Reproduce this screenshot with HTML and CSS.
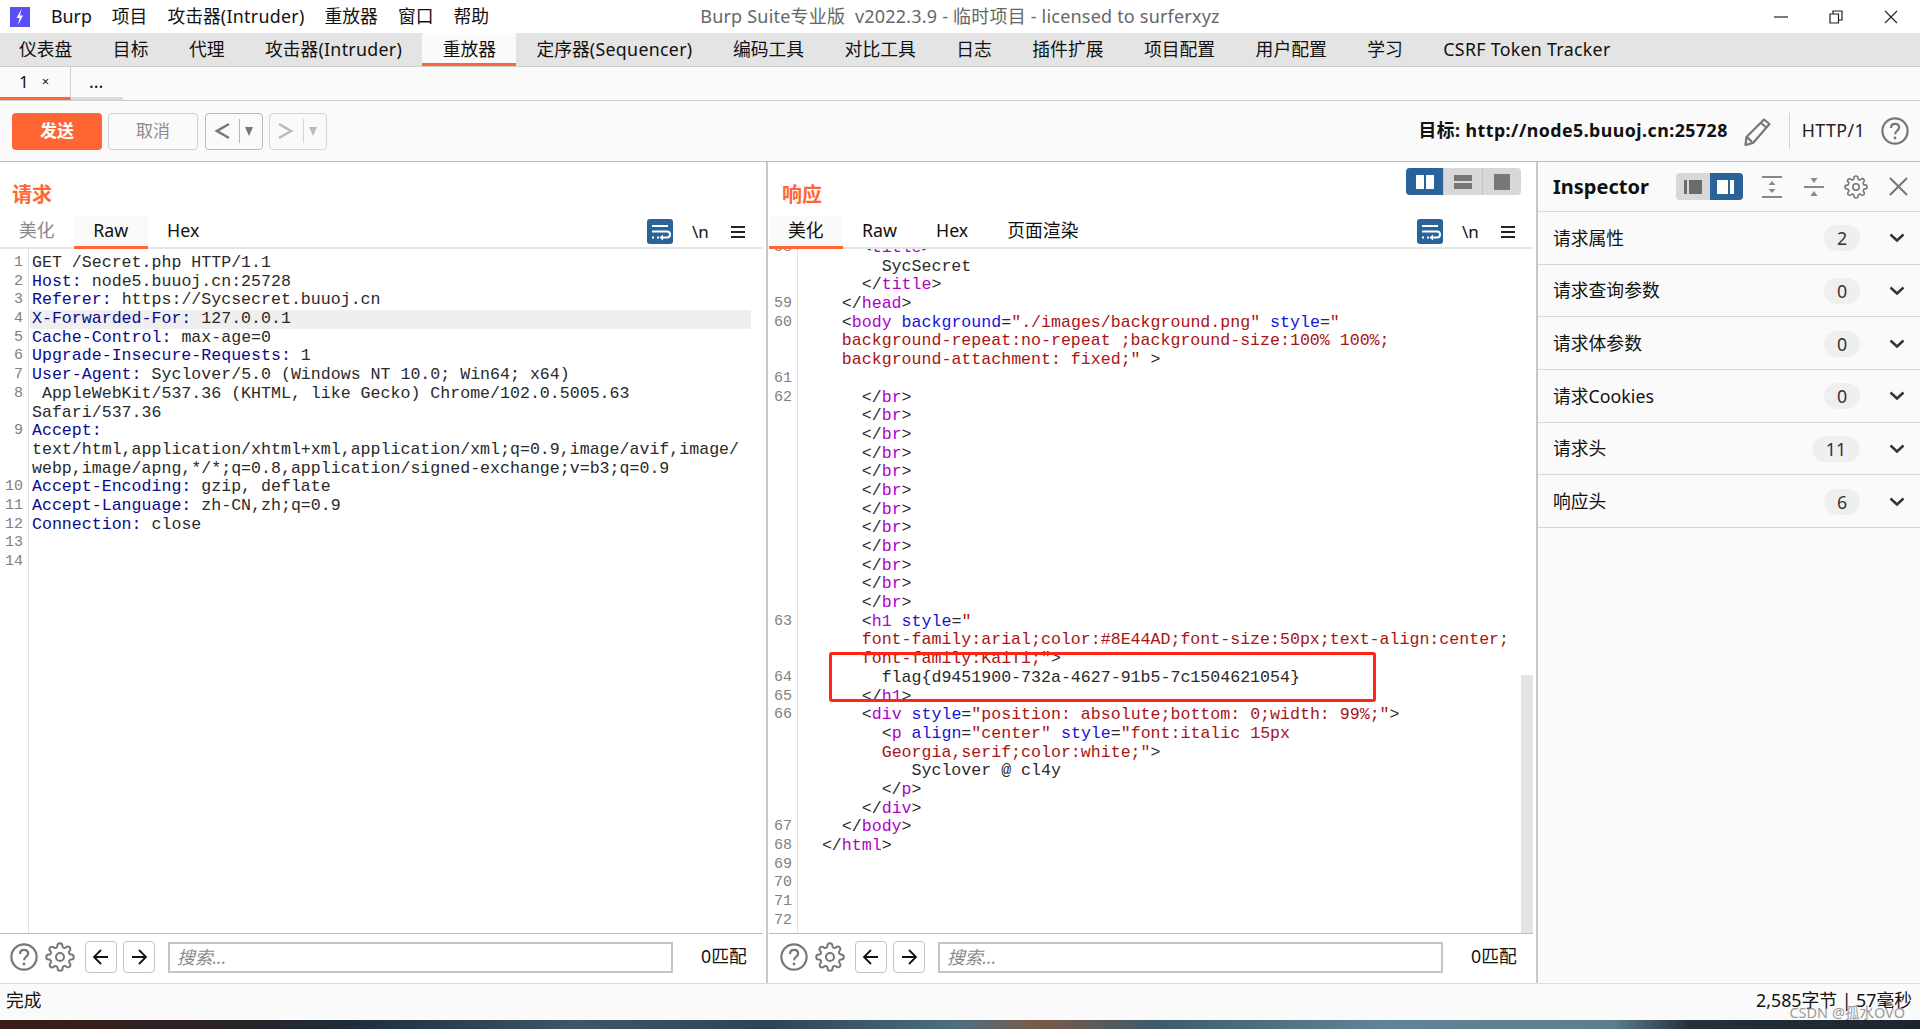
FILE: index.html
```html
<!DOCTYPE html>
<html lang="zh-CN">
<head>
<meta charset="utf-8">
<title>Burp Suite</title>
<link rel="stylesheet" href="styles.css">
</head>
<body>
<svg class="defs" width="0" height="0" aria-hidden="true">
  <defs>
    <symbol id="gear" viewBox="0 0 24 24"><circle cx="12" cy="12" r="3.2" fill="none" stroke="currentColor" stroke-width="1.6"/><path fill="none" stroke="currentColor" stroke-width="1.6" stroke-linejoin="round" d="M19.4 15a1.65 1.65 0 0 0 .33 1.82l.06.06a2 2 0 1 1-2.83 2.83l-.06-.06a1.65 1.65 0 0 0-2.82 1.17V21a2 2 0 0 1-4 0v-.09A1.65 1.65 0 0 0 7.2 19.74l-.06.06a2 2 0 1 1-2.83-2.83l.06-.06a1.65 1.65 0 0 0-1.17-2.82H3a2 2 0 0 1 0-4h.09A1.65 1.65 0 0 0 4.26 7.2l-.06-.06a2 2 0 1 1 2.83-2.83l.06.06a1.65 1.65 0 0 0 2.82-1.17V3a2 2 0 0 1 4 0v.09a1.65 1.65 0 0 0 2.89 1.17l.06-.06a2 2 0 1 1 2.83 2.83l-.06.06a1.65 1.65 0 0 0 1.17 2.82H21a2 2 0 0 1 0 4h-.09A1.65 1.65 0 0 0 19.4 15z"/></symbol>
    <symbol id="help" viewBox="0 0 28 28"><circle cx="14" cy="14" r="12.6" fill="none" stroke="currentColor" stroke-width="2.2"/><path fill="none" stroke="currentColor" stroke-width="2.2" d="M10 11c0-2.6 1.8-4.1 4.1-4.1s4 1.5 4 3.7c0 3.1-4 3.3-4 6.6"/><circle cx="14" cy="21" r="1.4" fill="currentColor"/></symbol>
    <symbol id="wrap" viewBox="0 0 26 25"><rect width="26" height="25" rx="3" fill="#2a6398"/><path fill="none" stroke="#fff" stroke-width="2" d="M5 7h16M5 12.500h15a2.500 2.500 0 0 1 0 6h-5M5 18.500h2M10 18.500h2"/><path fill="#fff" d="M16 15.500v6l-3.500-3z"/></symbol>
    <symbol id="back" viewBox="0 0 20 20"><path fill="none" stroke="currentColor" stroke-width="1.800" d="M17 10H3M10 3l-7 7 7 7"/></symbol>
    <symbol id="fwd" viewBox="0 0 20 20"><path fill="none" stroke="currentColor" stroke-width="1.800" d="M3 10h14M10 3l7 7-7 7"/></symbol>
    <symbol id="burger" viewBox="0 0 16 14"><path fill="none" stroke="currentColor" stroke-width="2" d="M1 2h14M1 7h14M1 12h14"/></symbol>
    <symbol id="chev" viewBox="0 0 16 10"><path fill="none" stroke="currentColor" stroke-width="2.400" d="M1.500 1.500 8 7.500l6.500-6"/></symbol>
  </defs>
</svg>

<header class="titlebar">
  <nav class="menu">
    <svg class="logo" viewBox="0 0 20 20"><rect width="20" height="20" fill="#5b50f5"/><path fill="#fff" d="M11.500 2 6.500 11h3l-1.500 7 5-9.500h-3z"/></svg>
    <span class="menu-item first">Burp</span><span class="menu-item">项目</span><span class="menu-item">攻击器<span class="lat">(Intruder)</span></span><span class="menu-item">重放器</span><span class="menu-item">窗口</span><span class="menu-item">帮助</span>
  </nav>
  <div class="app-title">Burp Suite专业版&nbsp; v2022.3.9 - 临时项目 - licensed to surferxyz</div>
  <div class="win-controls">
    <svg class="win-ico" viewBox="0 0 14 14"><path stroke="#222" stroke-width="1.200" d="M0 7h14"/></svg>
    <svg class="win-ico" viewBox="0 0 14 14"><path fill="none" stroke="#222" stroke-width="1.200" d="M1 4h8.500v9H1zM4 4V1h9v9H9.500"/></svg>
    <svg class="win-ico" viewBox="0 0 14 14"><path stroke="#222" stroke-width="1.100" d="M1 1l12 12M13 1 1 13"/></svg>
  </div>
</header>

<nav class="main-tabs">
  <span class="main-tab">仪表盘</span><span class="main-tab">目标</span><span class="main-tab">代理</span><span class="main-tab">攻击器<span class="lat">(Intruder)</span></span><span class="main-tab active">重放器</span><span class="main-tab">定序器<span class="lat">(Sequencer)</span></span><span class="main-tab">编码工具</span><span class="main-tab">对比工具</span><span class="main-tab">日志</span><span class="main-tab">插件扩展</span><span class="main-tab">项目配置</span><span class="main-tab">用户配置</span><span class="main-tab">学习</span><span class="main-tab lat">CSRF Token Tracker</span>
</nav>

<nav class="req-tabs">
  <span class="req-tab active"><span class="req-num">1</span><span class="req-x">×</span></span>
  <span class="req-tab more">...</span>
</nav>

<section class="toolbar">
  <button class="btn send">发送</button>
  <button class="btn cancel">取消</button>
  <div class="nav-btn">
    <svg class="nav-arrow" viewBox="0 0 16 20"><path fill="none" stroke="#777" stroke-width="2.600" d="M15 3 3 10l12 7"/></svg><i class="nav-sep"></i><i class="nav-tri"></i>
  </div>
  <div class="nav-btn disabled">
    <svg class="nav-arrow" viewBox="0 0 16 20"><path fill="none" stroke="#bbb" stroke-width="2.600" d="M1 3l12 7-12 7"/></svg><i class="nav-sep"></i><i class="nav-tri"></i>
  </div>
  <div class="target">目标: http://node5.buuoj.cn:25728</div>
  <svg class="pencil" viewBox="0 0 30 30"><path fill="none" stroke="#777" stroke-width="2.200" stroke-linejoin="round" d="M21 3.500 26.500 8 10 27l-7.500 2 1-8zM18 7l6 5M4 21l5 5"/></svg>
  <i class="tool-sep"></i>
  <span class="http">HTTP/1</span>
  <svg class="help-lg"><use href="#help"/></svg>
</section>

<main class="workspace">
  <section class="pane pane-req">
    <div class="pane-head"><h2 class="pane-title">请求</h2></div>
    <div class="tabs">
      <span class="tab muted">美化</span><span class="tab active">Raw</span><span class="tab">Hex</span>
      <div class="tab-tools">
        <svg class="wrap-ico"><use href="#wrap"/></svg><span class="nl">\n</span><svg class="burger"><use href="#burger"/></svg>
      </div>
    </div>
    <div class="editor">
      <div class="lines">
        <div class="row"><span class="num">1</span><span class="txt">GET /Secret.php HTTP/1.1</span></div>
        <div class="row"><span class="num">2</span><span class="txt"><b>Host:</b> node5.buuoj.cn:25728</span></div>
        <div class="row"><span class="num">3</span><span class="txt"><b>Referer:</b> https://Sycsecret.buuoj.cn</span></div>
        <div class="row hl"><span class="num">4</span><span class="txt"><b>X-Forwarded-For:</b> 127.0.0.1</span></div>
        <div class="row"><span class="num">5</span><span class="txt"><b>Cache-Control:</b> max-age=0</span></div>
        <div class="row"><span class="num">6</span><span class="txt"><b>Upgrade-Insecure-Requests:</b> 1</span></div>
        <div class="row"><span class="num">7</span><span class="txt"><b>User-Agent:</b> Syclover/5.0 (Windows NT 10.0; Win64; x64)</span></div>
        <div class="row"><span class="num">8</span><span class="txt"> AppleWebKit/537.36 (KHTML, like Gecko) Chrome/102.0.5005.63</span></div>
        <div class="row"><span class="num"></span><span class="txt">Safari/537.36</span></div>
        <div class="row"><span class="num">9</span><span class="txt"><b>Accept:</b></span></div>
        <div class="row"><span class="num"></span><span class="txt">text/html,application/xhtml+xml,application/xml;q=0.9,image/avif,image/</span></div>
        <div class="row"><span class="num"></span><span class="txt">webp,image/apng,*/*;q=0.8,application/signed-exchange;v=b3;q=0.9</span></div>
        <div class="row"><span class="num">10</span><span class="txt"><b>Accept-Encoding:</b> gzip, deflate</span></div>
        <div class="row"><span class="num">11</span><span class="txt"><b>Accept-Language:</b> zh-CN,zh;q=0.9</span></div>
        <div class="row"><span class="num">12</span><span class="txt"><b>Connection:</b> close</span></div>
        <div class="row"><span class="num">13</span><span class="txt"></span></div>
        <div class="row"><span class="num">14</span><span class="txt"></span></div>
      </div>
    </div>
    <div class="searchbar">
      <svg class="help-sm"><use href="#help"/></svg>
      <svg class="gear-sm"><use href="#gear"/></svg>
      <span class="arrow-btn"><svg class="arrow-ico"><use href="#back"/></svg></span>
      <span class="arrow-btn"><svg class="arrow-ico"><use href="#fwd"/></svg></span>
      <div class="search-input">搜索...</div>
      <span class="matches">0匹配</span>
    </div>
  </section>

  <section class="pane pane-res">
    <div class="pane-head">
      <h2 class="pane-title">响应</h2>
      <div class="layout-switch">
        <span class="seg on"><svg class="seg-ico" viewBox="0 0 20 16"><path fill="#fff" d="M1 1h8v14H1zM11 1h8v14h-8z"/></svg></span>
        <span class="seg"><svg class="seg-ico" viewBox="0 0 20 16"><path fill="#777" d="M1 1h18v6H1zM1 9h18v6H1z"/></svg></span>
        <span class="seg"><svg class="seg-ico" viewBox="0 0 20 16"><path fill="#777" d="M2 0h16v16H2z"/></svg></span>
      </div>
    </div>
    <div class="tabs">
      <span class="tab active">美化</span><span class="tab">Raw</span><span class="tab">Hex</span><span class="tab">页面渲染</span>
      <div class="tab-tools">
        <svg class="wrap-ico"><use href="#wrap"/></svg><span class="nl">\n</span><svg class="burger"><use href="#burger"/></svg>
      </div>
    </div>
    <div class="editor">
      <div class="lines scrolled">
        <div class="row"><span class="num">58</span><span class="txt">      &lt;<u>title</u>&gt;</span></div>
        <div class="row"><span class="num"></span><span class="txt">        SycSecret</span></div>
        <div class="row"><span class="num"></span><span class="txt">      &lt;/<u>title</u>&gt;</span></div>
        <div class="row"><span class="num">59</span><span class="txt">    &lt;/<u>head</u>&gt;</span></div>
        <div class="row"><span class="num">60</span><span class="txt">    &lt;<u>body</u> <b>background</b>=<s>"./images/background.png"</s> <b>style</b>=<s>"</s></span></div>
        <div class="row"><span class="num"></span><span class="txt">    <s>background-repeat:no-repeat ;background-size:100% 100%;</s></span></div>
        <div class="row"><span class="num"></span><span class="txt">    <s>background-attachment: fixed;"</s> &gt;</span></div>
        <div class="row"><span class="num">61</span><span class="txt"></span></div>
        <div class="row"><span class="num">62</span><span class="txt">      &lt;/<u>br</u>&gt;</span></div>
        <div class="row"><span class="num"></span><span class="txt">      &lt;/<u>br</u>&gt;</span></div>
        <div class="row"><span class="num"></span><span class="txt">      &lt;/<u>br</u>&gt;</span></div>
        <div class="row"><span class="num"></span><span class="txt">      &lt;/<u>br</u>&gt;</span></div>
        <div class="row"><span class="num"></span><span class="txt">      &lt;/<u>br</u>&gt;</span></div>
        <div class="row"><span class="num"></span><span class="txt">      &lt;/<u>br</u>&gt;</span></div>
        <div class="row"><span class="num"></span><span class="txt">      &lt;/<u>br</u>&gt;</span></div>
        <div class="row"><span class="num"></span><span class="txt">      &lt;/<u>br</u>&gt;</span></div>
        <div class="row"><span class="num"></span><span class="txt">      &lt;/<u>br</u>&gt;</span></div>
        <div class="row"><span class="num"></span><span class="txt">      &lt;/<u>br</u>&gt;</span></div>
        <div class="row"><span class="num"></span><span class="txt">      &lt;/<u>br</u>&gt;</span></div>
        <div class="row"><span class="num"></span><span class="txt">      &lt;/<u>br</u>&gt;</span></div>
        <div class="row"><span class="num">63</span><span class="txt">      &lt;<u>h1</u> <b>style</b>=<s>"</s></span></div>
        <div class="row"><span class="num"></span><span class="txt">      <s>font-family:arial;color:#8E44AD;font-size:50px;text-align:center;</s></span></div>
        <div class="row"><span class="num"></span><span class="txt">      <s>font-family:KaiTi;"</s>&gt;</span></div>
        <div class="row"><span class="num">64</span><span class="txt">        flag{d9451900-732a-4627-91b5-7c1504621054}</span></div>
        <div class="row"><span class="num">65</span><span class="txt">      &lt;/<u>h1</u>&gt;</span></div>
        <div class="row"><span class="num">66</span><span class="txt">      &lt;<u>div</u> <b>style</b>=<s>"position: absolute;bottom: 0;width: 99%;"</s>&gt;</span></div>
        <div class="row"><span class="num"></span><span class="txt">        &lt;<u>p</u> <b>align</b>=<s>"center"</s> <b>style</b>=<s>"font:italic 15px</s></span></div>
        <div class="row"><span class="num"></span><span class="txt">        <s>Georgia,serif;color:white;"</s>&gt;</span></div>
        <div class="row"><span class="num"></span><span class="txt">           Syclover @ cl4y</span></div>
        <div class="row"><span class="num"></span><span class="txt">        &lt;/<u>p</u>&gt;</span></div>
        <div class="row"><span class="num"></span><span class="txt">      &lt;/<u>div</u>&gt;</span></div>
        <div class="row"><span class="num">67</span><span class="txt">    &lt;/<u>body</u>&gt;</span></div>
        <div class="row"><span class="num">68</span><span class="txt">  &lt;/<u>html</u>&gt;</span></div>
        <div class="row"><span class="num">69</span><span class="txt"></span></div>
        <div class="row"><span class="num">70</span><span class="txt"></span></div>
        <div class="row"><span class="num">71</span><span class="txt"></span></div>
        <div class="row"><span class="num">72</span><span class="txt"></span></div>
      </div>
      <div class="scroll-thumb"></div>
      <div class="flag-box"></div>
    </div>
    <div class="searchbar">
      <svg class="help-sm"><use href="#help"/></svg>
      <svg class="gear-sm"><use href="#gear"/></svg>
      <span class="arrow-btn"><svg class="arrow-ico"><use href="#back"/></svg></span>
      <span class="arrow-btn"><svg class="arrow-ico"><use href="#fwd"/></svg></span>
      <div class="search-input">搜索...</div>
      <span class="matches">0匹配</span>
    </div>
  </section>

  <aside class="inspector">
    <div class="insp-head">
      <h2 class="insp-title">Inspector</h2>
      <div class="insp-switch">
        <span class="iseg"><svg class="iseg-ico" viewBox="0 0 18 14"><path fill="#6b6b6b" d="M0 0h3v14H0zM5 0h13v14H5z"/></svg></span>
        <span class="iseg on"><svg class="iseg-ico" viewBox="0 0 18 14"><path fill="#fff" d="M0 0h11v14H0zM13 0h4v14h-4z"/></svg></span>
      </div>
      <svg class="insp-ico first" viewBox="0 0 20 22"><path stroke="#888" stroke-width="2" d="M0 1h20M0 21h20"/><path fill="#888" d="M10 5l3.500 4h-7zM10 17l-3.500-4h7z"/></svg>
      <svg class="insp-ico" viewBox="0 0 20 22"><path stroke="#888" stroke-width="2" d="M0 11h20"/><path fill="#888" d="M10 7 6.500 2h7zM10 15l3.500 5h-7z"/></svg>
      <svg class="insp-gear"><use href="#gear"/></svg>
      <svg class="insp-close" viewBox="0 0 20 20"><path stroke="#777" stroke-width="2.200" d="M1 1l18 18M19 1 1 19"/></svg>
    </div>
    <div class="insp-row"><span class="insp-label">请求属性</span><span class="badge">2</span><svg class="chev"><use href="#chev"/></svg></div>
    <div class="insp-row"><span class="insp-label">请求查询参数</span><span class="badge">0</span><svg class="chev"><use href="#chev"/></svg></div>
    <div class="insp-row"><span class="insp-label">请求体参数</span><span class="badge">0</span><svg class="chev"><use href="#chev"/></svg></div>
    <div class="insp-row"><span class="insp-label">请求Cookies</span><span class="badge">0</span><svg class="chev"><use href="#chev"/></svg></div>
    <div class="insp-row"><span class="insp-label">请求头</span><span class="badge wide">11</span><svg class="chev"><use href="#chev"/></svg></div>
    <div class="insp-row"><span class="insp-label">响应头</span><span class="badge">6</span><svg class="chev"><use href="#chev"/></svg></div>
  </aside>
</main>

<footer class="statusbar">
  <span>完成</span>
  <span>2,585字节 | 57毫秒</span>
  <span class="watermark">CSDN @孤水OVO</span>
</footer>
<div class="wallpaper"></div>
</body>
</html>
```

FILE: styles.css
```css
* { box-sizing: border-box; }
html, body { margin: 0; padding: 0; }
body {
  width: 1920px;
  height: 1029px;
  overflow: hidden;
  background: #fafafa;
  color: #111;
  font: 17.8px/1.2 "Noto Sans", "Noto Sans CJK SC", sans-serif;
  display: flex;
  flex-direction: column;
}
.defs { position: absolute; }
.lat { letter-spacing: .3px; }

/* Title bar */
.titlebar {
  height: 33px;
  flex: none;
  background: #fff;
  display: grid;
  grid-template-columns: 1fr auto 1fr;
  align-items: center;
}
.menu { display: flex; align-items: center; padding-left: 10px; }
.logo { width: 20px; height: 20px; margin-right: 21px; }
.menu-item { margin-right: 20px; }
.app-title { color: #666; font-size: 18px; letter-spacing: .2px; }
.win-controls { display: flex; justify-content: flex-end; align-items: center; gap: 41px; padding-right: 22px; }
.win-ico { width: 14px; height: 14px; }

/* Main tabs */
.main-tabs {
  height: 34px;
  flex: none;
  background: #e4e4e4;
  border-bottom: 1px solid #c9d0d0;
  display: flex;
}
.main-tab { padding: 0 20.25px; line-height: 32px; height: 33px; }
.main-tab:first-child { padding-left: 19px; }
.main-tab.active { background: #fafafa; border-bottom: 3px solid #ff6633; }

/* Request tabs */
.req-tabs {
  height: 34px;
  flex: none;
  display: flex;
  border-bottom: 1px solid #c9d0d0;
}
.req-tab { height: 33px; display: flex; align-items: center; border-bottom: 3px solid #d8dcdc; }
.req-tab.active { width: 71px; border-bottom-color: #ff6633; border-right: 1px solid #d0d0d0; padding-left: 19px; gap: 13px; }
.req-num { font-size: 17px; }
.req-x { font-size: 13px; }
.req-tab.more { width: 52px; padding-left: 18px; }

/* Toolbar */
.toolbar {
  height: 61px;
  flex: none;
  display: flex;
  align-items: center;
  padding: 0 11px 0 12px;
  border-bottom: 1px solid #bdbdbd;
}
.btn { font: inherit; width: 90px; height: 37px; border-radius: 4px; padding: 0; }
.send { background: #ff6633; color: #fff; border: 0; font-weight: 700; font-size: 17px; }
.cancel { background: #fafafa; color: #8a8a8a; border: 1px solid #cfcfcf; margin-left: 6px; font-size: 17px; }
.nav-btn {
  width: 58px; height: 37px; margin-left: 7px;
  border: 1px solid #b8b8b8; border-radius: 4px;
  display: flex; align-items: center; padding-left: 8px;
}
.nav-btn.disabled { margin-left: 6px; border-color: #d4d4d4; }
.nav-arrow { width: 16px; height: 20px; }
.nav-sep { width: 1px; height: 24px; background: #b8b8b8; margin: 0 5px 0 9px; }
.nav-tri { border-left: 4px solid transparent; border-right: 4px solid transparent; border-top: 9px solid #777; }
.disabled .nav-tri { border-top-color: #bbb; }
.disabled .nav-sep { background: #d4d4d4; }
.target { margin-left: auto; font-weight: 700; letter-spacing: .45px; }
.pencil { width: 30px; height: 30px; margin-left: 15px; }
.tool-sep { width: 1px; height: 36px; background: #d4d4d4; margin-left: 16px; }
.http { margin-left: 12px; color: #222; letter-spacing: .4px; }
.help-lg { width: 28px; height: 28px; margin-left: 16px; color: #777; }

/* Workspace */
.workspace { flex: none; height: 821px; display: flex; background: #fff; }
.pane { display: flex; flex-direction: column; min-width: 0; }
.pane-req { width: 766px; padding-right: 3px; }
.pane-res { width: 770px; border-left: 2px solid #c8c8c8; padding: 0 3px 0 1px; }
.pane-head { height: 54px; flex: none; display: flex; align-items: flex-start; justify-content: space-between; padding-left: 12px; }
.pane-res .pane-head { padding: 0 12px 0 13px; }
.pane-title { margin: 21px 0 0; font-size: 20px; font-weight: 700; color: #ff6633; }
.layout-switch { margin-top: 6px; display: flex; height: 27px; border-radius: 4px; overflow: hidden; background: #d8d8d8; }
.seg { width: 39px; display: flex; align-items: center; justify-content: center; border-left: 1px solid #c4c4c4; }
.seg.on { width: 37px; background: #2a6398; border: 0; }
.seg-ico { width: 20px; height: 16px; }

.tabs { height: 33px; flex: none; display: flex; align-items: stretch; border-bottom: 2px solid #e2e6e6; }
.tab { padding: 0 19.5px; line-height: 28px; height: 33px; color: #111; }
.tab.muted { color: #8a8a8a; padding-left: 19px; }
.tab.active { background: #fafafa; border-bottom: 3px solid #ff6633; padding: 0; width: 73.5px; text-align: center; }
.tab-tools { margin-left: auto; display: flex; align-items: center; padding-right: 17px; height: 31px; }
.wrap-ico { width: 26px; height: 25px; }
.nl { width: 15px; margin: 0 23px 0 19px; font-size: 17px; line-height: 25px; }
.burger { width: 16px; height: 14px; color: #222; }

/* Editor */
.editor { flex: 1; min-height: 0; position: relative; overflow: hidden; background: #fff; }
.lines {
  height: 100%;
  padding-top: 5px;
  font: 16.6px/18.7px "Liberation Mono", "Courier New", monospace;
  color: #2a2a2a;
  background: linear-gradient(#e0e0e0, #e0e0e0) 28px 0 / 1px 100% no-repeat;
}
.lines.scrolled { padding-top: 0; margin-top: -10px; height: calc(100% + 12px); }
.row { display: flex; height: 18.7px; white-space: pre; }
.num { width: 28px; flex: none; padding-right: 5px; text-align: right; color: #808080; font-size: 15px; }
.txt { padding-left: 4px; flex: 1; }
.pane-res .txt { padding-left: 5px; }
.pane-req .txt { margin-right: 12px; }
.row.hl .txt { background: #efefef; margin-left: 2px; padding-left: 2px; }
.txt b { font-weight: 400; color: #0a0a8c; }
.pane-res .txt b { color: #1414d8; }
.txt u { text-decoration: none; color: #b000c8; }
.txt s { text-decoration: none; color: #a81414; }
.scroll-thumb { position: absolute; right: 0; top: 426px; bottom: 0; width: 12px; background: #e4e4e4; }
.flag-box { position: absolute; left: 60px; top: 403px; width: 547px; height: 50px; border: 3px solid #ff2414; border-radius: 3px; }

/* Search bar */
.searchbar { height: 50px; flex: none; display: flex; align-items: center; border-top: 1px solid #bdbdbd; padding: 0 0 3px 10px; }
.pane-res .searchbar { padding-left: 11px; }
.help-sm { width: 28px; height: 28px; color: #777; }
.gear-sm { width: 30px; height: 30px; margin-left: 7px; color: #777; }
.arrow-btn { width: 32px; height: 32px; margin-left: 6px; border: 1px solid #c4c4c4; border-radius: 4px; display: flex; align-items: center; justify-content: center; color: #111; }
.arrow-btn:first-of-type { margin-left: 10px; }
.arrow-ico { width: 20px; height: 20px; }
.search-input { width: 505px; height: 31px; margin-left: 13px; border: 2px solid #c4c4c4; padding-left: 7px; font-style: italic; color: #8a8a8a; line-height: 26px; background: #fff; }
.matches { margin-left: 28px; }

/* Inspector */
.inspector { flex: 1; border-left: 2px solid #c8c8c8; background: #fafafa; }
.insp-head { height: 50px; display: flex; align-items: center; padding: 0 10px 0 15px; border-bottom: 1px solid #d8d8d8; }
.insp-title { margin: 0; font-size: 20px; font-weight: 700; width: 123px; }
.insp-switch { display: flex; height: 27px; border-radius: 4px; overflow: hidden; background: #d8d8d8; width: 67px; }
.iseg { flex: 1; display: flex; align-items: center; justify-content: center; }
.iseg.on { background: #2a6398; }
.iseg-ico { width: 18px; height: 14px; }
.insp-ico { width: 20px; height: 22px; margin-left: 22px; }
.insp-ico.first { margin-left: 19px; }
.insp-gear { width: 24px; height: 24px; margin-left: 20px; color: #777; }
.insp-close { width: 19px; height: 19px; margin-left: 21px; }
.insp-row { height: 52.7px; display: flex; align-items: center; padding: 1px 15px 0; border-bottom: 1px solid #d8d8d8; }
.insp-label { flex: 1; }
.badge { width: 36px; height: 26px; border-radius: 13px; background: #efefef; text-align: center; line-height: 26px; color: #333; }
.badge.wide { width: 48px; }
.chev { width: 16px; height: 10px; margin-left: 29px; color: #333; }

/* Status */
.statusbar { height: 37px; flex: none; position: relative; display: flex; align-items: center; justify-content: space-between; padding: 0 8px 2px 6px; border-top: 1px solid #dcdcdc; background: #fafafa; }
.watermark { position: absolute; right: 15px; bottom: -1px; font-size: 14.5px; color: rgba(120,120,120,.75); }
.wallpaper {
  flex: 1;
  background: linear-gradient(90deg, #3a1c14 0, #2a2428 12%, #1d2c3a 18%, #3f5666 30%, #2d4454 40%, #4f6e80 50%, #7a5a48 54%, #3f5a6a 60%, #5f8496 72%, #5d7e8c 84%, #25303c 88%, #1c2430 100%);
}
```
